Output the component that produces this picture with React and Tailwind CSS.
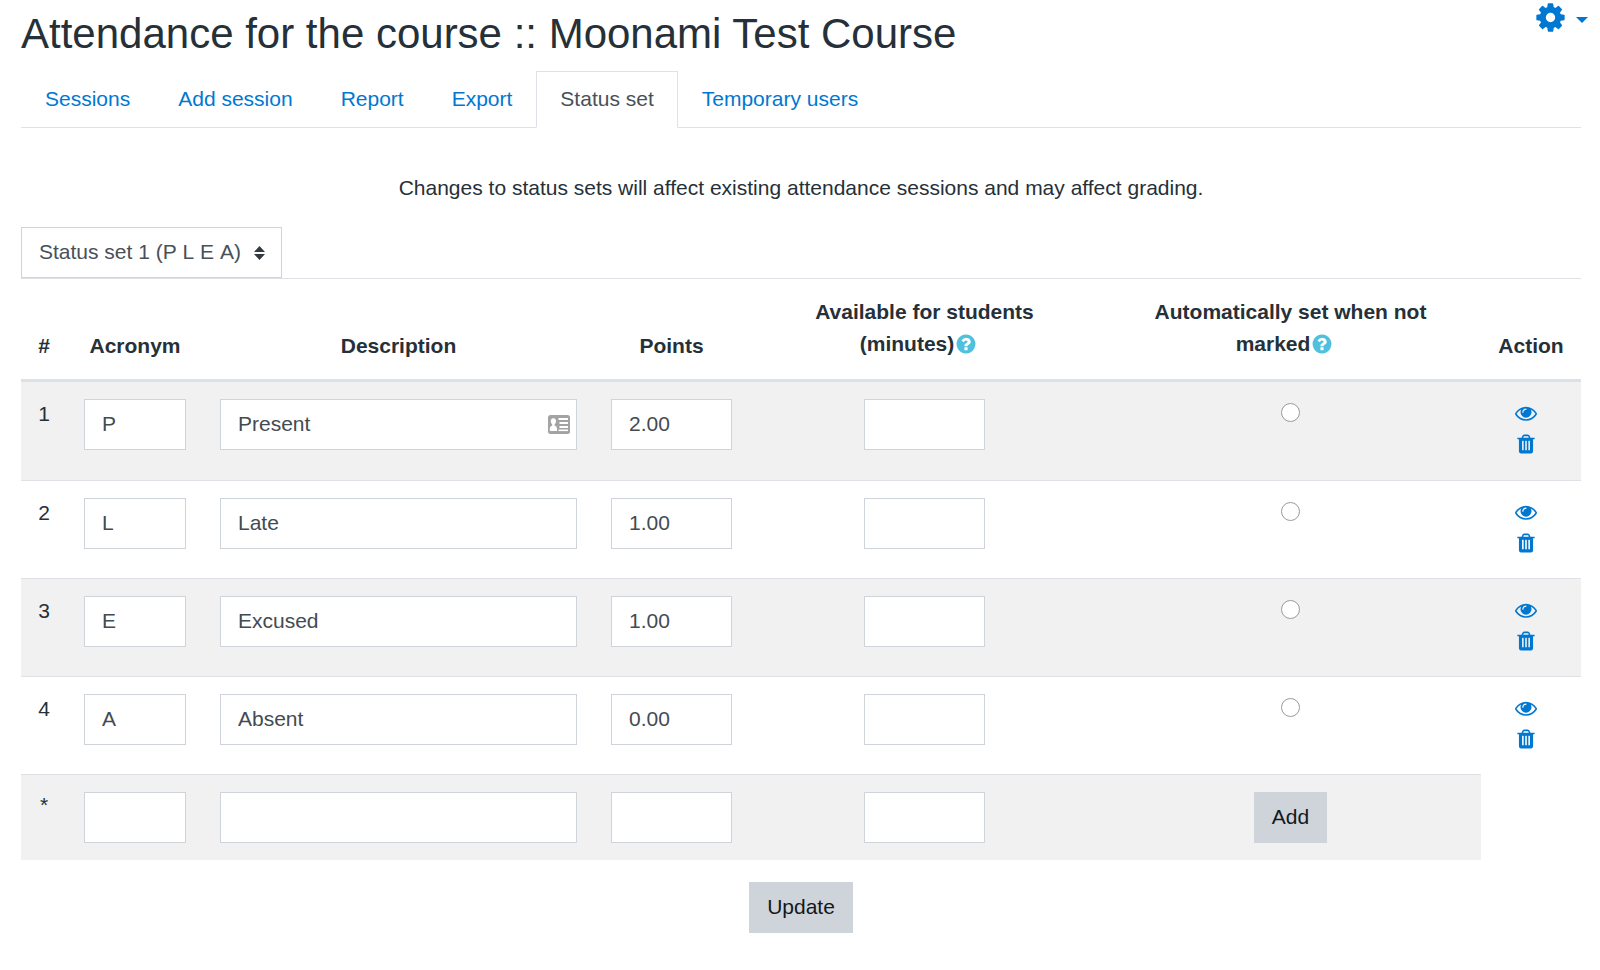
import { useState } from 'react'

const tabs = ['Sessions', 'Add session', 'Report', 'Export', 'Status set', 'Temporary users']

const initialStatuses = [
  { id: 1, acronym: 'P', description: 'Present', points: '2.00', contact: true },
  { id: 2, acronym: 'L', description: 'Late', points: '1.00' },
  { id: 3, acronym: 'E', description: 'Excused', points: '1.00' },
  { id: 4, acronym: 'A', description: 'Absent', points: '0.00' },
]

// Font Awesome 4 glyphs
const icons = {
  cog: 'M1152 896q0-106-75-181t-181-75-181 75-75 181 75 181 181 75 181-75 75-181zm512-109v222q0 12-8 23t-20 13l-185 28q-19 54-39 91 35 50 107 138 10 12 10 25t-9 23q-27 37-99 108t-94 71q-12 0-26-9l-138-108q-44 23-91 38-16 136-29 186-7 28-36 28h-222q-14 0-24.5-8.5t-11.5-21.5l-28-184q-49-16-90-37l-141 107q-10 9-25 9-14 0-25-11-126-114-165-168-7-10-7-23 0-12 8-23 15-21 51-66.5t54-70.5q-27-50-41-99l-183-27q-13-2-21-12.5t-8-23.5v-222q0-12 8-23t19-13l186-28q14-46 39-92-40-57-107-138-10-12-10-24 0-10 9-23 26-36 98.5-107.5t94.5-71.5q13 0 26 10l138 107q44-23 91-38 16-136 29-186 7-28 36-28h222q14 0 24.5 8.5t11.5 21.5l28 184q49 16 90 37l142-107q9-9 24-9 13 0 25 10 129 119 165 170 7 8 7 22 0 12-8 23-15 21-51 66.5t-54 70.5q26 50 41 98l183 28q13 2 21 12.5t8 23.5z',
  eye: 'M1664 960q-152-236-381-353 61 104 61 225 0 185-131.5 316.5t-316.5 131.5-316.5-131.5-131.5-316.5q0-121 61-225-229 117-381 353 133 205 333.5 326.5t434.5 121.5 434.5-121.5 333.5-326.5zm-720-384q0-20-14-34t-34-14q-125 0-214.5 89.5t-89.5 214.5q0 20 14 34t34 14 34-14 14-34q0-86 61-147t147-61q20 0 34-14t14-34zm848 384q0 34-20 69-140 230-376.5 368.5t-499.5 138.5-499.5-139-376.5-368q-20-35-20-69t20-69q140-229 376.5-368t499.5-139 499.5 139 376.5 368q20 35 20 69z',
  trash: 'M704 1376v-704q0-14-9-23t-23-9h-64q-14 0-23 9t-9 23v704q0 14 9 23t23 9h64q14 0 23-9t9-23zm256 0v-704q0-14-9-23t-23-9h-64q-14 0-23 9t-9 23v704q0 14 9 23t23 9h64q14 0 23-9t9-23zm256 0v-704q0-14-9-23t-23-9h-64q-14 0-23 9t-9 23v704q0 14 9 23t23 9h64q14 0 23-9t9-23zm-544-992h448l-48-117q-7-9-17-11h-317q-10 2-17 11zm928 32v64q0 14-9 23t-23 9h-96v948q0 83-47 143.5t-113 60.5h-832q-66 0-113-58.5t-47-141.5v-952h-96q-14 0-23-9t-9-23v-64q0-14 9-23t23-9h309l70-167q15-37 54-63t79-26h320q40 0 79 26t54 63l70 167h309q14 0 23 9t9 23z',
  help: 'M1024 1376v-192q0-14-9-23t-23-9h-192q-14 0-23 9t-9 23v192q0 14 9 23t23 9h192q14 0 23-9t9-23zm256-672q0-88-55.5-163t-138.5-116-170-41q-243 0-371 213-15 24 8 42l132 100q7 6 19 6 16 0 25-12 53-68 86-92 34-24 86-24 48 0 85.5 26t37.5 59q0 38-20 61t-68 45q-63 28-115.5 86.5t-52.5 125.5v36q0 14 9 23t23 9h192q14 0 23-9t9-23q0-19 21.5-49.5t54.5-49.5q32-18 49-28.5t46-35 44.5-48 28-60.5 12.5-81zm384 192q0 209-103 385.5t-279.5 279.5-385.5 103-385.5-103-279.5-279.5-103-385.5 103-385.5 279.5-279.5 385.5-103 385.5 103 279.5 279.5 103 385.5z',
}

function Icon({ name, className }) {
  return (
    <svg viewBox="0 0 1792 1792" fill="currentColor" className={className} aria-hidden="true">
      <path d={icons[name]} />
    </svg>
  )
}

function ContactIcon() {
  return (
    <svg viewBox="0 0 22 19" className="absolute right-[7px] top-4 w-[22px] h-[19px] pointer-events-none" aria-hidden="true">
      <rect width="22" height="19" rx="2.5" fill="#a3a3a3" />
      <g fill="#fff">
        <ellipse cx="5.4" cy="6.3" rx="2.6" ry="3.1" />
        <rect x="4.2" y="8" width="2.4" height="3" />
        <path d="M1.8 16v-2.6c0-2 1.6-3 3.6-3s3.6 1 3.6 3V16z" />
        <rect x="10.5" y="3" width="9.5" height="2" />
        <rect x="11.5" y="7" width="8.5" height="2" />
        <rect x="11.5" y="11" width="8.5" height="2" />
        <rect x="10.5" y="14.5" width="9.5" height="1.6" />
      </g>
    </svg>
  )
}

function TextField({ label, className, ...props }) {
  return (
    <input
      type="text"
      aria-label={label}
      className={`block h-[51px] px-[17px] pb-px border border-[#ced4da] bg-white text-[#434b52] ${className}`}
      {...props}
    />
  )
}

function Th({ children }) {
  return (
    <th className="px-[17px] py-[17px] h-[103px] align-bottom font-bold text-center border-t border-t-[#dee2e6] border-b-3 border-b-[#dce1e5]">
      {children}
    </th>
  )
}

function Td({ children, className = '' }) {
  return <td className={`px-[17px] pt-[17px] align-top border-t border-[#dee2e6] ${className}`}>{children}</td>
}

function HelpButton({ label }) {
  return (
    <button type="button" aria-label={label} className="inline-block align-middle ml-px mr-3 pb-[2px] text-[#4fc0dd]">
      <Icon name="help" className="block w-[22px] h-[22px]" />
    </button>
  )
}

function StatusRow({ status, selected, onSelect }) {
  const { id, acronym, description, points, contact } = status
  return (
    <tr className={`h-[98px] first:[&>td]:border-t-0 ${id % 2 ? 'bg-[#f1f1f1]' : 'bg-white'}`}>
      <Td className="text-center leading-[30px]">{id}</Td>
      <Td><TextField label={`Acronym ${id}`} defaultValue={acronym} className="w-full" /></Td>
      <Td>
        <div className="relative">
          <TextField label={`Description ${id}`} defaultValue={description} className="w-full" />
          {contact && <ContactIcon />}
        </div>
      </Td>
      <Td><TextField label={`Points ${id}`} defaultValue={points} className="w-full" /></Td>
      <Td><TextField label={`Available minutes ${id}`} className="w-[121px] mx-auto" /></Td>
      <Td>
        <input
          type="radio"
          name="unmarked"
          aria-label={`Set ${description} when not marked`}
          checked={selected}
          onChange={onSelect}
          className="block appearance-none w-[19px] h-[19px] mx-auto mt-1 rounded-full border border-[#9a9a9a] bg-white checked:border-[6px] checked:border-[#0078d2]"
        />
      </Td>
      <Td>
        <div className="flex flex-col items-center pr-[10px] text-[#0078d2]">
          <a href="#hide" aria-label={`Hide ${description}`} className="h-[31px] pt-[3px]">
            <Icon name="eye" className="w-[22px] h-[22px]" />
          </a>
          <a href="#delete" aria-label={`Delete ${description}`} className="h-[31px] pt-[3px]">
            <Icon name="trash" className="w-[22px] h-[22px]" />
          </a>
        </div>
      </Td>
    </tr>
  )
}

export default function App() {
  const [unmarked, setUnmarked] = useState(null)

  return (
    <main className="min-h-screen bg-white pl-[21px] pr-[19px] pb-9 font-['Liberation_Sans',Arial,sans-serif] text-[21px] leading-[32px] text-[#263038]">
      {/* Title and settings menu */}
      <header className="flex items-start justify-between">
        <h1 className="pt-[9px] mb-3 text-[42px] leading-[50px]">
          Attendance for the course :: Moonami Test Course
        </h1>
        <button type="button" aria-label="Settings" className="flex items-center gap-[9px] mt-px -mr-[7px] text-[#0078d2]">
          <Icon name="cog" className="w-[33px] h-[33px]" />
          <svg viewBox="0 0 12 6" className="w-3 h-[6px] mt-[5px]" fill="currentColor" aria-hidden="true">
            <path d="M0 0h12L6 6z" />
          </svg>
        </button>
      </header>

      {/* Tabs */}
      <nav className="flex border-b border-[#dee2e6]">
        {tabs.map((tab) => (
          <a
            key={tab}
            href="#"
            aria-current={tab === 'Status set' ? 'page' : undefined}
            className={`-mb-px px-[23px] pt-[11px] pb-3 border ${
              tab === 'Status set'
                ? 'border-[#dee2e6] border-b-white bg-white text-[#495057]'
                : 'border-transparent text-[#0078d2]'
            }`}
          >
            {tab}
          </a>
        ))}
      </nav>

      <p className="mt-11 mb-[23px] text-center">
        Changes to status sets will affect existing attendance sessions and may affect grading.
      </p>

      <form onSubmit={(e) => e.preventDefault()}>
        <div className="relative w-[261px]">
          <select
            aria-label="Status set"
            className="block appearance-none w-full h-[51px] pl-[17px] pr-9 pb-[2px] border border-[#ced4da] bg-white text-[#495057] [font-kerning:none]"
          >
            <option>Status set 1 (P L E A)</option>
          </select>
          <svg viewBox="0 0 11 14" className="absolute right-[17px] top-[19px] w-[11px] h-[14px] pointer-events-none" fill="#343a40" aria-hidden="true">
            <path d="M5.5 0L11 6H0zM5.5 14L11 8H0z" />
          </svg>
        </div>

        <table className="w-full table-fixed border-separate border-spacing-0">
          <colgroup>
            <col className="w-[46px]" />
            <col className="w-[136px]" />
            <col className="w-[391px]" />
            <col className="w-[155px]" />
            <col className="w-[351px]" />
            <col className="w-[381px]" />
            <col className="w-[100px]" />
          </colgroup>
          <thead>
            <tr>
              <Th>#</Th>
              <Th><span className="-mx-4">Acronym</span></Th>
              <Th>Description</Th>
              <Th>Points</Th>
              <Th>
                <div className="pb-[2px]">
                  Available for students<br />(minutes)<HelpButton label="Help with available for students" />
                </div>
              </Th>
              <Th>
                <div className="pb-[2px]">
                  Automatically set when not<br />marked<HelpButton label="Help with automatically set when not marked" />
                </div>
              </Th>
              <Th>Action</Th>
            </tr>
          </thead>
          <tbody>
            {initialStatuses.map((status) => (
              <StatusRow
                key={status.id}
                status={status}
                selected={unmarked === status.id}
                onSelect={() => setUnmarked(status.id)}
              />
            ))}
            <tr className="h-[86px] [&>td]:bg-[#f1f1f1]">
              <Td className="text-center leading-[26px]">*</Td>
              <Td><TextField label="New acronym" className="w-full" /></Td>
              <Td><TextField label="New description" className="w-full" /></Td>
              <Td><TextField label="New points" className="w-full" /></Td>
              <Td><TextField label="New available minutes" className="w-[121px] mx-auto" /></Td>
              <Td>
                <button type="button" className="block mx-auto h-[51px] px-[18px] pb-[2px] bg-[#ced4da] text-[#14181b]">Add</button>
              </Td>
            </tr>
          </tbody>
        </table>

        <button type="submit" className="block mx-auto mt-[22px] h-[51px] px-[18px] pb-[2px] bg-[#ced4da] text-[#14181b]">
          Update
        </button>
      </form>
    </main>
  )
}
